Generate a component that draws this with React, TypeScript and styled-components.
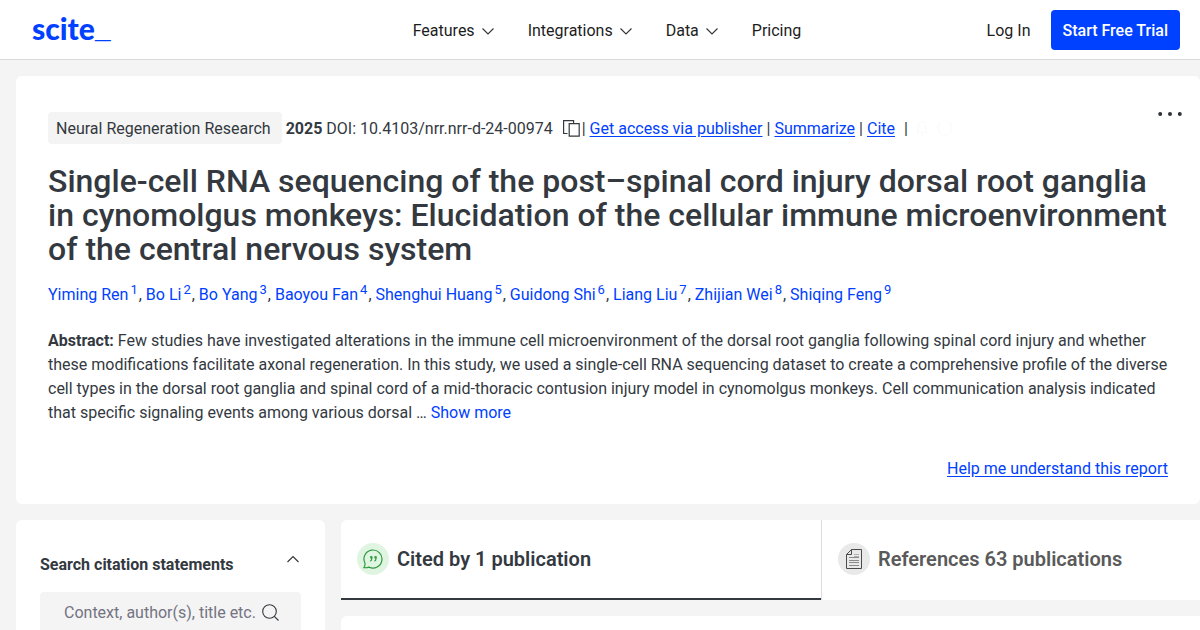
import React from "react";
import styled, { createGlobalStyle } from "styled-components";

const ink = "#33393f";
const blue = "#0040ff";

const GlobalStyle = createGlobalStyle`
  *, *::before, *::after { box-sizing: border-box; }
  html { overflow-x: hidden; }
  body {
    margin: 0;
    background: #f4f4f4;
    color: ${ink};
    font: 400 16px/24px Roboto, "Liberation Sans", sans-serif;
  }
  h1, h2, p, ul { margin: 0; padding: 0; }
  button, input { font: inherit; color: inherit; border: 0; background: none; padding: 0; }
  button { cursor: pointer; }
  svg { display: block; flex: none; }
`;

const Header = styled.header`
  display: grid;
  grid-template-columns: 1fr auto 1fr;
  align-items: center;
  height: 60px;
  padding: 0 20px 0 32px;
  background: #fff;
  border-bottom: 1px solid #d9d9d9;
`;

const Logo = styled.a`
  justify-self: start;
  padding-bottom: 4px;
  color: ${blue};
  font: 900 30px/40px Lato, sans-serif;
  text-decoration: none;
`;

const Cursor = styled.span`
  font: 700 28px/1 "Liberation Sans", sans-serif;
  line-height: 0;
  vertical-align: 2px;
`;

const Nav = styled.nav`
  display: flex;
  gap: 34px;
  padding: 2px 0 0 2px;
  color: #1d1d1d;
`;

const NavButton = styled.button`
  display: flex;
  align-items: center;
  gap: 7px;
`;

const NavLink = styled.a`
  color: #1d1d1d;
  text-decoration: none;
`;

const Account = styled.div`
  display: flex;
  align-items: baseline;
  justify-content: flex-end;
  gap: 20px;
`;

const TrialButton = styled.button`
  height: 40px;
  padding: 2px 12px 0;
  border-radius: 4px;
  background: ${blue};
  color: #fff;
  font-weight: 500;
`;

const Page = styled.main`
  display: grid;
  gap: 16px;
  padding: 16px 0 0 16px;
`;

const Paper = styled.article`
  position: relative;
  padding: 36px 32px 23px;
  background: #fff;
  border-radius: 6px;
`;

const MoreButton = styled.button`
  position: absolute;
  top: 26px;
  right: 18px;
  padding: 8px 0;
`;

const Meta = styled.div`
  display: flex;
  align-items: baseline;
  gap: 4px;
`;

const Journal = styled.span`
  padding: 5px 11px 3px 8px;
  border-radius: 4px;
  background: #f4f4f4;
`;

const CopyButton = styled.button`
  align-self: center;
  margin: 0 -2px 0 6px;
`;

const Spaced = styled.span`
  margin-left: 5px;
`;

const FaintIcons = styled.span`
  display: flex;
  align-self: center;
  align-items: center;
  gap: 9px;
  margin-left: 4px;
  color: #fafafa;
`;

const TextLink = styled.a`
  color: ${blue};
  text-decoration: underline;
  text-underline-offset: 2px;
`;

const Title = styled.h1`
  margin-top: 20px;
  font-size: 32px;
  line-height: 34px;
  font-weight: 500;
`;

const Authors = styled.p`
  margin-top: 17px;
`;

const Author = styled.a`
  color: ${blue};
  text-decoration: none;
  sup {
    margin: 0 1px 0 2px;
    font-size: 13px;
    line-height: 0;
  }
`;

const Abstract = styled.p`
  margin: 22px -8px 0 0;
`;

const InlineButton = styled.button`
  color: ${blue};
`;

const HelpRow = styled.div`
  display: flex;
  justify-content: flex-end;
  margin-top: 32px;
`;

const Columns = styled.div`
  display: grid;
  grid-template-columns: 309px minmax(0, 1fr);
  gap: 16px;
`;

const Sidebar = styled.aside`
  padding: 24px;
  background: #fff;
  border-radius: 6px 6px 0 0;
`;

const SidebarToggle = styled.button`
  display: flex;
  align-items: flex-start;
  justify-content: space-between;
  width: 100%;
  padding-top: 9px;
  font-weight: 700;
  svg { margin: 2px 2px 0 0; }
`;

const SearchField = styled.label`
  display: flex;
  align-items: center;
  margin-top: 15px;
  height: 40px;
  padding: 0 22px 0 24px;
  border-radius: 4px 4px 0 0;
  background: #f4f4f4;
`;

const SearchInput = styled.input`
  flex: 1;
  min-width: 0;
  padding-top: 2px;
  outline: 0;
  &::placeholder { color: #737382; opacity: 1; }
`;

const Results = styled.section`
  display: grid;
  grid-template-rows: auto 1fr;
  gap: 16px;
`;

const Tabs = styled.div`
  display: flex;
`;

const Tab = styled.button<{ $active?: boolean }>`
  display: flex;
  align-items: center;
  gap: 8px;
  flex: ${(p) => (p.$active ? "0 0 480px" : "1")};
  height: 80px;
  padding: ${(p) => (p.$active ? "0 16px" : "0 16px 2px")};
  background: #fff;
  border-radius: ${(p) => (p.$active ? "6px 0 0 0" : "0")};
  border-bottom: ${(p) => (p.$active ? `2px solid ${ink}` : "0")};
  border-left: ${(p) => (p.$active ? "0" : "1px solid #dcdcdc")};
  color: ${(p) => (p.$active ? ink : "#5a5a5a")};
  font-size: 20px;
  font-weight: 600;
  white-space: nowrap;
`;

const Badge = styled.span<{ $tint: string }>`
  display: grid;
  place-items: center;
  flex: none;
  width: 32px;
  height: 32px;
  border-radius: 50%;
  background: ${(p) => p.$tint};
`;

const ResultCard = styled.div`
  background: #fff;
  border-radius: 6px 0 0 0;
`;

const Chevron = ({ up = false }: { up?: boolean }) => (
  <svg width="12" height="8" viewBox="0 0 12 8" fill="none" stroke="#333" strokeWidth="1.1" aria-hidden="true">
    <path d={up ? "M.5 7 6 1.5 11.5 7" : "M.5 1.5 6 7 11.5 1.5"} />
  </svg>
);

const CopyIcon = () => (
  <svg width="17" height="17" viewBox="0 0 17 17" fill="none" stroke={ink} strokeWidth="1.2" aria-hidden="true">
    <path d="M4.5 13.5H.6V.6h10V3" />
    <path d="M6.2 3.6h10v12.600h-10z" />
  </svg>
);

const BellIcon = () => (
  <svg width="12" height="16" viewBox="0 0 12 16" fill="none" stroke="currentColor" aria-hidden="true">
    <path d="M1 12.5c1.5-2 1-4 1.300-7C2.600 3 4 1.500 6 1.500S9.400 3 9.700 5.500c.3 3-.2 5 1.300 7zM4.500 14.500h3" />
  </svg>
);

const CircleIcon = () => (
  <svg width="16" height="16" viewBox="0 0 16 16" fill="none" stroke="currentColor" aria-hidden="true">
    <path d="M3.500 2.500A7 7 0 1 0 12.500 2.500" />
  </svg>
);

const DotsIcon = () => (
  <svg width="24" height="8" viewBox="0 0 24 8" fill="#2d3338" aria-hidden="true">
    <circle cx="2.2" cy="4" r="2" />
    <circle cx="12" cy="4" r="2" />
    <circle cx="21.8" cy="4" r="2" />
  </svg>
);

const SearchIcon = () => (
  <svg width="17" height="17" viewBox="0 0 17 17" fill="none" stroke={ink} strokeWidth="1.1" aria-hidden="true">
    <circle cx="7.5" cy="7.5" r="6.8" />
    <path d="m12.3 12.3 4.2 4.2" />
  </svg>
);

const QuoteIcon = () => (
  <svg width="20" height="20" viewBox="0 0 20 20" fill="none" stroke="#2d9a3f" strokeWidth="1.2" aria-hidden="true">
    <path d="M2 14.2A9 9 0 1 1 6 18.1Q4 18.9.8 18.7 2.2 17 2 14.200Z" strokeLinejoin="round" />
    <path d="M7.3 7.8h1.5v1.8q0 2-1.500 2.500M11.500 7.800H13v1.800q0 2-1.500 2.500" />
    <path d="M7.3 7.4h1.9v2H7.3zM11.5 7.4h1.9v2h-1.9z" fill="#2d9a3f" stroke="none" />
  </svg>
);

const DocumentIcon = () => (
  <svg width="16" height="20" viewBox="0 0 16 20" fill="none" aria-hidden="true">
    <path d="M5.5.5h10v19H.5v-14zM5.5.5v5h-5" stroke="#4a4a4a" />
    <path d="M8 5.5h5M8 7.5h5" stroke="#b0b0b0" />
    <path d="M3 8.5h10M3 11.5h10M3 13.5h10M3 16.5h10" stroke="#8a8a8a" />
  </svg>
);

const menus = ["Features", "Integrations", "Data"];

const authors = [
  "Yiming Ren",
  "Bo Li",
  "Bo Yang",
  "Baoyou Fan",
  "Shenghui Huang",
  "Guidong Shi",
  "Liang Liu",
  "Zhijian Wei",
  "Shiqing Feng",
];

export default function App() {
  return (
    <>
      <GlobalStyle />
      <Header>
        <Logo href="#">
          scite<Cursor>_</Cursor>
        </Logo>
        <Nav aria-label="Main">
          {menus.map((name) => (
            <NavButton key={name}>
              {name}
              <Chevron />
            </NavButton>
          ))}
          <NavLink href="#pricing">Pricing</NavLink>
        </Nav>
        <Account>
          <NavLink href="#login">Log In</NavLink>
          <TrialButton>Start Free Trial</TrialButton>
        </Account>
      </Header>

      <Page>
        <Paper>
          <MoreButton aria-label="More options">
            <DotsIcon />
          </MoreButton>
          <Meta>
            <Journal>Neural Regeneration Research</Journal>
            <strong>2025</strong>
            <span>DOI: 10.4103/nrr.nrr-d-24-00974</span>
            <CopyButton aria-label="Copy DOI">
              <CopyIcon />
            </CopyButton>
            <span>|</span>
            <TextLink href="#publisher">Get access via publisher</TextLink>
            <span>|</span>
            <TextLink href="#summarize">Summarize</TextLink>
            <span>|</span>
            <TextLink href="#cite">Cite</TextLink>
            <Spaced>|</Spaced>
            <FaintIcons>
              <BellIcon />
              <CircleIcon />
            </FaintIcons>
          </Meta>
          <Title>
            Single-cell RNA sequencing of the post–spinal cord injury dorsal root ganglia in cynomolgus monkeys:
            Elucidation of the cellular immune microenvironment of the central nervous system
          </Title>
          <Authors>
            {authors.map((name, i) => (
              <React.Fragment key={name}>
                {i > 0 && ", "}
                <Author href={`#author-${i + 1}`}>
                  {name}
                  <sup>{i + 1}</sup>
                </Author>
              </React.Fragment>
            ))}
          </Authors>
          <Abstract>
            <strong>Abstract:</strong> Few studies have investigated alterations in the immune cell microenvironment of
            the dorsal root ganglia following spinal cord injury and whether these modifications facilitate axonal
            regeneration. In this study, we used a single-cell RNA sequencing dataset to create a comprehensive profile
            of the diverse cell types in the dorsal root ganglia and spinal cord of a mid-thoracic contusion injury
            model in cynomolgus monkeys. Cell communication analysis indicated that specific signaling events among
            various dorsal … <InlineButton>Show more</InlineButton>
          </Abstract>
          <HelpRow>
            <TextLink href="#help">Help me understand this report</TextLink>
          </HelpRow>
        </Paper>

        <Columns>
          <Sidebar>
            <SidebarToggle aria-expanded="true">
              Search citation statements
              <Chevron up />
            </SidebarToggle>
            <SearchField>
              <SearchInput aria-label="Search citation statements" placeholder="Context, author(s), title etc." />
              <SearchIcon />
            </SearchField>
          </Sidebar>
          <Results>
            <Tabs role="tablist">
              <Tab role="tab" aria-selected="true" $active>
                <Badge $tint="#dff5e1">
                  <QuoteIcon />
                </Badge>
                Cited by 1 publication
              </Tab>
              <Tab role="tab" aria-selected="false">
                <Badge $tint="#e9e9e9">
                  <DocumentIcon />
                </Badge>
                References 63 publications
              </Tab>
            </Tabs>
            <ResultCard />
          </Results>
        </Columns>
      </Page>
    </>
  );
}
